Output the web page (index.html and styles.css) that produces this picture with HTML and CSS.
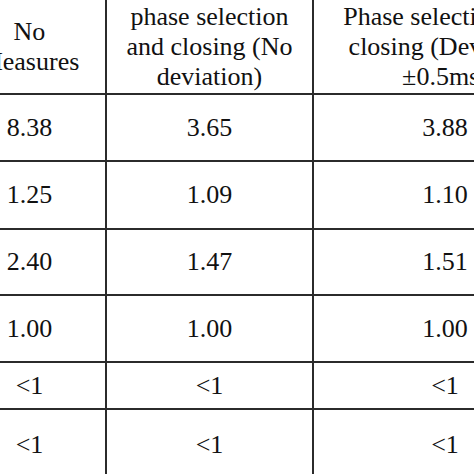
FILE: index.html
```html
<!DOCTYPE html>
<html>
<head>
<meta charset="utf-8">
<link rel="stylesheet" href="styles.css">
</head>
<body>
<div class="sheet">
  <div class="grid">
    <div class="cell head">No<br>Measures</div>
    <div class="cell head">phase selection and closing (No deviation)</div>
    <div class="cell head wide">Phase selection and closing (Deviation ±0.5ms)</div>

    <div class="cell">8.38</div>
    <div class="cell">3.65</div>
    <div class="cell">3.88</div>

    <div class="cell">1.25</div>
    <div class="cell">1.09</div>
    <div class="cell">1.10</div>

    <div class="cell">2.40</div>
    <div class="cell">1.47</div>
    <div class="cell">1.51</div>

    <div class="cell">1.00</div>
    <div class="cell">1.00</div>
    <div class="cell">1.00</div>

    <div class="cell">&lt;1</div>
    <div class="cell">&lt;1</div>
    <div class="cell">&lt;1</div>

    <div class="cell">&lt;1</div>
    <div class="cell">&lt;1</div>
    <div class="cell">&lt;1</div>
  </div>
</div>
</body>
</html>
```

FILE: styles.css
```css
html, body {
  margin: 0;
  padding: 0;
  background: #ffffff;
}
body {
  width: 474px;
  height: 474px;
  overflow: hidden;
}
.sheet {
  width: 474px;
  height: 474px;
  overflow: hidden;
}
.grid {
  display: grid;
  grid-template-columns: 151px 205px 262px;
  grid-template-rows: 93px 65px 66px 64px 65px 45px 70px;
  gap: 2px;
  background: #2b2b2b;
  margin-left: -46px;
  width: 622px;
  font-family: "Liberation Serif", "Times New Roman", serif;
  font-size: 26px;
  line-height: 30px;
  color: #111111;
}
.cell {
  background: #ffffff;
  display: flex;
  align-items: center;
  justify-content: center;
  text-align: center;
  padding: 0 5px;
}
```
